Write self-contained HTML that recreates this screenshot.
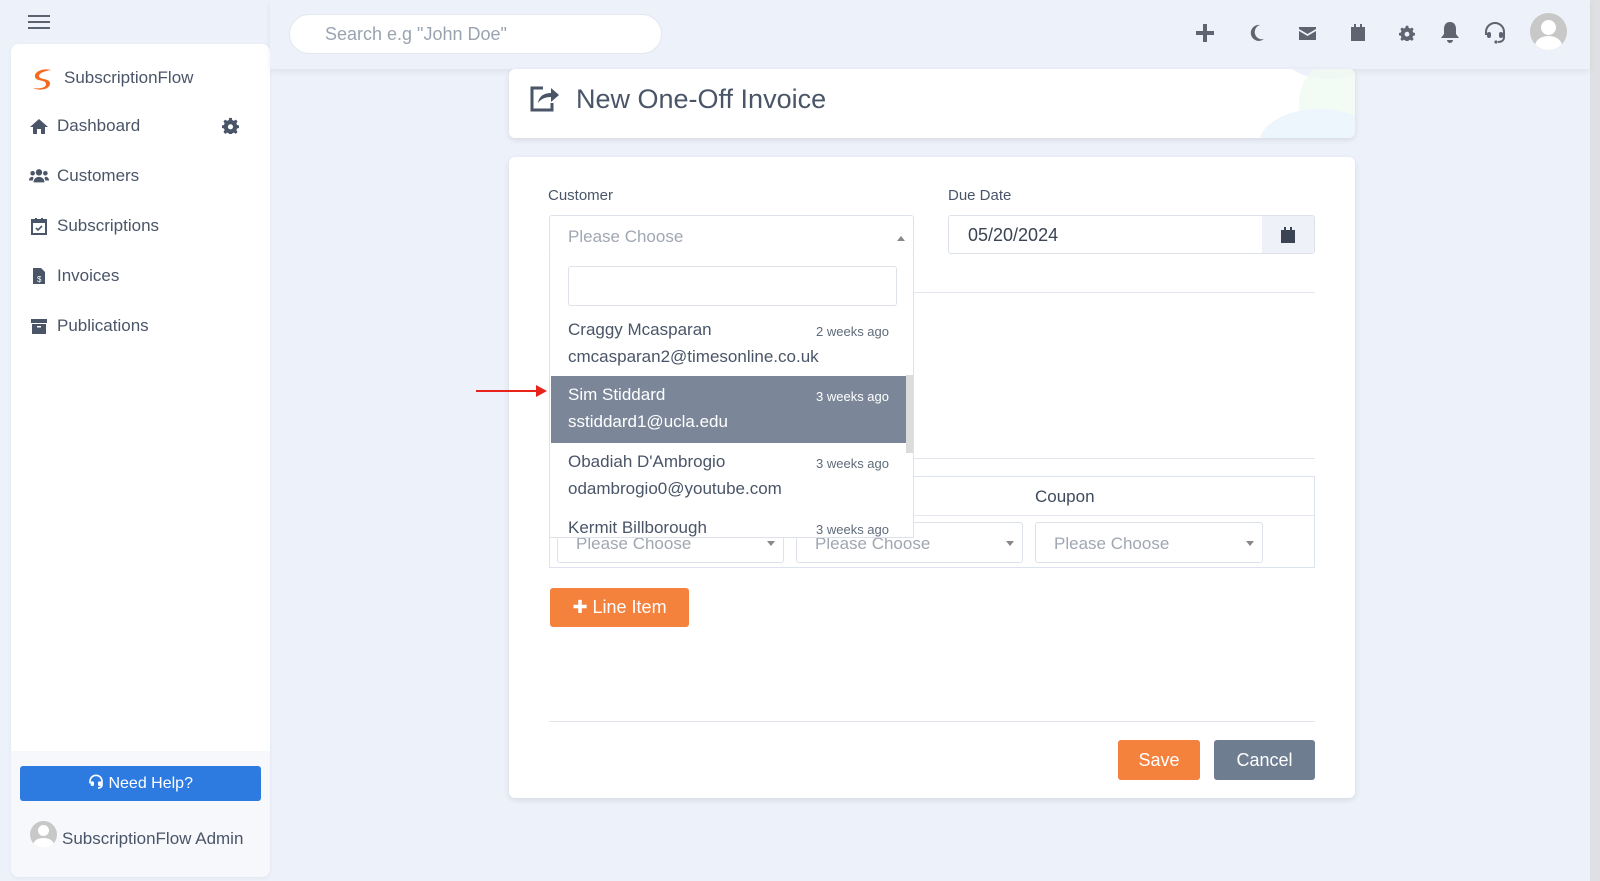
<!DOCTYPE html>
<html><head><meta charset="utf-8"><style>
*{box-sizing:border-box;margin:0;padding:0}
body{width:1600px;height:881px;overflow:hidden;background:#edf1f9;font-family:"Liberation Sans",sans-serif;color:#4a5568;position:relative}
.abs{position:absolute}
.side{left:11px;top:44px;width:259px;height:833px;background:#fff;border-radius:8px;box-shadow:0 1px 4px rgba(0,0,0,.06);overflow:hidden}
.side .foot{position:absolute;left:0;top:707px;width:100%;height:126px;background:#f7f8fc}
.nav{position:absolute;left:18px;font-size:17px;color:#4a5568;display:flex;align-items:center}
.nav svg{width:20px;height:20px;margin-right:8px;fill:#4a5568}
.top{left:270px;top:0;width:1320px;height:69px;background:#edf1f9;box-shadow:0 3px 6px rgba(0,0,0,.06)}
.search{left:289px;top:14px;width:373px;height:40px;background:#fff;border-radius:20px;border:1px solid #e3e7ef;font-size:18px;color:#9aa3b0;padding:9px 0 0 35px}
.ic{fill:#5e6470}
.card{background:#fff;border-radius:6px;box-shadow:0 2px 6px rgba(0,0,0,.1)}
.lbl{font-size:15px;color:#4a5568}
.sel{border:1px solid #dde2ea;border-radius:3px;background:#fff;font-size:17px;color:#a0a7b2;padding:11px 0 0 18px}
.caret{position:absolute;right:8px;top:18px;width:0;height:0;border-left:4px solid transparent;border-right:4px solid transparent;border-top:5px solid #888}
.item{position:absolute;left:1px;width:355px;height:66px;padding:9px 0 0 17px}
.item .n{font-size:17px;color:#4a5568}
.item .e{font-size:17px;color:#4a5568;margin-top:7px}
.item .t{position:absolute;right:17px;top:13px;font-size:13px;color:#5f6b7a}
.btn{border-radius:3px;color:#fff;font-size:18px;text-align:center}
</style></head><body>
<div class="abs" style="left:1590px;top:0;width:10px;height:881px;background:#dfe0e3"></div>
<div class="abs" style="left:28px;top:15px;width:22px;height:2px;background:#5a6270"></div>
<div class="abs" style="left:28px;top:21px;width:22px;height:2px;background:#5a6270"></div>
<div class="abs" style="left:28px;top:27px;width:22px;height:2px;background:#5a6270"></div>

<div class="abs side">
 <svg class="abs" style="left:18px;top:23px" width="28" height="24" viewBox="0 0 28 24"><path d="M22 3C15 1 5 4 6 10c1 5 12 2 11 8-1 3-7 4-13 3 6 3 16 2 17-4 1-6-11-4-11-8 0-3 6-5 12-6z" fill="#f56a1f"/></svg>
 <div class="abs" style="left:53px;top:24px;font-size:17px;color:#4a5568">SubscriptionFlow</div>
 <div class="nav" style="top:72px"><svg viewBox="0 0 20 20"><path d="M10 3L1 11h3v7h4v-5h4v5h4v-7h3z"/></svg>Dashboard</div>
 <svg class="abs" style="left:211px;top:73px" width="17" height="17" viewBox="0 0 20 20"><path fill="#4a5568" d="M8.5 1h3l.5 2.5 2 1 2.2-1.4 2.1 2.1L16.9 7.4l.8 2 2.3.6v3l-2.3.5-.8 2 1.4 2.2-2.1 2.1-2.2-1.4-2 .8-.5 2.3h-3L8 19.2l-2-.8-2.2 1.4-2.1-2.1L3.1 15.5l-.8-2L0 13v-3l2.3-.6.8-2L1.7 5.2l2.1-2.1L6 4.5l2-1z"/><circle cx="10" cy="11.5" r="3" fill="#fff"/></svg>
 <div class="nav" style="top:122px"><svg viewBox="0 0 22 20"><circle cx="11" cy="6" r="3.5"/><circle cx="4" cy="7" r="2.5"/><circle cx="18" cy="7" r="2.5"/><path d="M5 17c0-4 3-6 6-6s6 2 6 6zM0 15c0-3 2-4 4-4l1 1-1 3zM22 15c0-3-2-4-4-4l-1 1 1 3z"/></svg>Customers</div>
 <div class="nav" style="top:172px"><svg viewBox="0 0 20 20"><path d="M3 4h14v14H3z" fill="none" stroke="#4a5568" stroke-width="2"/><rect x="3" y="4" width="14" height="3"/><rect x="6" y="2" width="2" height="3"/><rect x="12" y="2" width="2" height="3"/><path d="M7 12l2 2 4-4" fill="none" stroke="#4a5568" stroke-width="1.6"/></svg>Subscriptions</div>
 <div class="nav" style="top:222px"><svg viewBox="0 0 20 20"><path d="M4 2h8l4 4v12H4z"/><text x="8" y="16" font-size="8" fill="#fff">$</text></svg>Invoices</div>
 <div class="nav" style="top:272px"><svg viewBox="0 0 20 20"><rect x="2" y="3" width="16" height="4"/><rect x="3" y="8" width="14" height="10"/><rect x="8" y="10" width="4" height="1.5" fill="#fff"/></svg>Publications</div>
 <div class="foot">
  <div class="abs btn" style="left:9px;top:15px;width:241px;height:35px;background:#2d7be0;font-size:16px;padding-top:8px">
   <svg width="16" height="16" viewBox="0 0 24 24" style="vertical-align:-2px"><path d="M3 14v-3a9 9 0 0 1 18 0v5c0 3-2 5-6 5" fill="none" stroke="#fff" stroke-width="2.5"/><rect fill="#fff" x="4" y="11" width="5" height="7" rx="2"/><rect fill="#fff" x="15" y="11" width="5" height="7" rx="2"/></svg> Need Help?</div>
  <div class="abs" style="left:19px;top:70px;width:27px;height:27px;border-radius:50%;background:#c8c8c8;overflow:hidden"><div style="position:absolute;left:8px;top:4px;width:11px;height:11px;border-radius:50%;background:#fff"></div><div style="position:absolute;left:3px;top:17px;width:21px;height:14px;border-radius:50%;background:#fff"></div></div>
  <div class="abs" style="left:51px;top:78px;font-size:17px;color:#4a5568">SubscriptionFlow Admin</div>
 </div>
</div>

<div class="abs top"></div>
<div class="abs search">Search e.g "John Doe"</div>
<svg class="abs" style="left:1195px;top:23px" width="20" height="20" viewBox="0 0 20 20"><path class="ic" d="M8 1h4v7h7v4h-7v7H8v-7H1V8h7z"/></svg>
<svg class="abs" style="left:1249px;top:23px" width="16" height="20" viewBox="0 0 16 20"><path class="ic" d="M11 2a8 8 0 1 0 4 14A7 7 0 0 1 11 2z"/></svg>
<svg class="abs" style="left:1299px;top:27px" width="17" height="13" viewBox="0 0 17 13"><path class="ic" d="M0 0h17v2L8.5 7 0 2zM0 4l8.5 5L17 4v9H0z"/></svg>
<svg class="abs" style="left:1351px;top:23px" width="14" height="18" viewBox="0 0 14 18"><path class="ic" d="M0 4h14v14H0z"/><rect class="ic" x="3" y="1" width="2" height="4"/><rect class="ic" x="9" y="1" width="2" height="4"/></svg>
<svg class="abs" style="left:1399px;top:25px" width="16" height="16" viewBox="0 0 20 20"><path fill="#5e6470" d="M8.5 1h3l.5 2.5 2 1 2.2-1.4 2.1 2.1L16.9 7.4l.8 2 2.3.6v3l-2.3.5-.8 2 1.4 2.2-2.1 2.1-2.2-1.4-2 .8-.5 2.3h-3L8 19.2l-2-.8-2.2 1.4-2.1-2.1L3.1 15.5l-.8-2L0 13v-3l2.3-.6.8-2L1.7 5.2l2.1-2.1L6 4.5l2-1z"/><circle cx="10" cy="11.5" r="3" fill="#edf1f9"/></svg>
<svg class="abs" style="left:1440px;top:21px" width="20" height="23" viewBox="0 0 20 23"><path class="ic" d="M10 1c4 0 6 3 6 7v5l3 4H1l3-4V8c0-4 2-7 6-7zM7 19h6a3 3 0 0 1-6 0z"/></svg>
<svg class="abs" style="left:1483px;top:21px" width="24" height="24" viewBox="0 0 24 24"><path d="M3 14v-3a9 9 0 0 1 18 0v5c0 3-2 5-6 5" fill="none" stroke="#5e6470" stroke-width="2"/><rect class="ic" x="4" y="11" width="4" height="6" rx="2"/><rect class="ic" x="16" y="11" width="4" height="6" rx="2"/><circle class="ic" cx="13" cy="21" r="1.6"/></svg>
<div class="abs" style="left:1530px;top:13px;width:37px;height:37px;border-radius:50%;background:#c8c8c8;overflow:hidden"><div style="position:absolute;left:11px;top:7px;width:15px;height:15px;border-radius:50%;background:#fff"></div><div style="position:absolute;left:5px;top:23px;width:27px;height:20px;border-radius:50%;background:#fff"></div></div>

<div class="abs card" style="left:509px;top:69px;width:846px;height:69px;overflow:hidden">
 <div class="abs" style="left:770px;top:-50px;width:100px;height:60px;border-radius:50%;background:#eef0fb"></div>
 <div class="abs" style="left:790px;top:-10px;width:80px;height:90px;border-radius:50%;background:#f0faf3;opacity:.8"></div>
 <div class="abs" style="left:750px;top:40px;width:120px;height:70px;border-radius:50%;background:#edf6fc"></div>
 <svg class="abs" style="left:20px;top:14px" width="32" height="30" viewBox="0 0 32 30"><path d="M14 5H3v22h20v-7" fill="none" stroke="#4a5568" stroke-width="3"/><path d="M9 20c1-7 6-10 13-10V5l8 7-8 7v-5c-6 0-10 2-13 6z" fill="#4a5568"/></svg>
 <div class="abs" style="left:67px;top:15px;font-size:27px;color:#4a5568">New One-Off Invoice</div>
</div>

<div class="abs card" style="left:509px;top:157px;width:846px;height:641px"></div>
<div class="abs lbl" style="left:548px;top:187px">Customer</div>
<div class="abs lbl" style="left:948px;top:187px">Due Date</div>
<div class="abs sel" style="left:549px;top:215px;width:365px;height:41px">Please Choose<div class="caret" style="border-top:none;border-bottom:5px solid #888;top:20px"></div></div>
<div class="abs" style="left:948px;top:215px;width:367px;height:39px;border:1px solid #dde2ea;border-radius:3px;background:#fff;font-size:18px;color:#3a4452;padding:9px 0 0 19px">05/20/2024</div>
<div class="abs" style="left:1262px;top:216px;width:52px;height:37px;background:#eef1f7"><svg style="position:absolute;left:19px;top:10px" width="14" height="17" viewBox="0 0 14 17"><path d="M0 4h14v13H0z" fill="#3a4452"/><rect x="3" y="1" width="2" height="4" fill="#3a4452"/><rect x="9" y="1" width="2" height="4" fill="#3a4452"/></svg></div>
<div class="abs" style="left:914px;top:292px;width:401px;height:1px;background:#e2e6ec"></div>
<div class="abs" style="left:549px;top:458px;width:766px;height:1px;background:#e2e6ec"></div>

<div class="abs" style="left:549px;top:476px;width:766px;height:92px;border:1px solid #dde3ee"></div>
<div class="abs" style="left:549px;top:515px;width:766px;height:1px;background:#e6eaf0"></div>
<div class="abs" style="left:1035px;top:487px;font-size:17px;color:#3f4a5a">Coupon</div>
<div class="abs sel" style="left:557px;top:522px;width:227px;height:41px">Please Choose<div class="caret"></div></div>
<div class="abs sel" style="left:796px;top:522px;width:227px;height:41px">Please Choose<div class="caret"></div></div>
<div class="abs sel" style="left:1035px;top:522px;width:228px;height:41px">Please Choose<div class="caret"></div></div>

<div class="abs" style="left:549px;top:255px;width:365px;height:283px;background:#fff;border:1px solid #dde2ea;border-top:none;overflow:hidden">
 <div class="abs" style="left:18px;top:11px;width:329px;height:40px;border:1px solid #dde2ea;border-radius:3px"></div>
 <div class="item" style="top:56px"><div class="n">Craggy Mcasparan</div><div class="e">cmcasparan2@timesonline.co.uk</div><div class="t">2 weeks ago</div></div>
 <div class="item" style="top:121px;background:#7b8799;height:67px"><div class="n" style="color:#fff">Sim Stiddard</div><div class="e" style="color:#fff">sstiddard1@ucla.edu</div><div class="t" style="color:#fff">3 weeks ago</div></div>
 <div class="item" style="top:188px"><div class="n">Obadiah D'Ambrogio</div><div class="e">odambrogio0@youtube.com</div><div class="t">3 weeks ago</div></div>
 <div class="item" style="top:254px"><div class="n">Kermit Billborough</div><div class="t">3 weeks ago</div></div>
 <div class="abs" style="left:356px;top:120px;width:7px;height:78px;background:#dcdcdc"></div>
</div>

<div class="abs" style="left:476px;top:390px;width:64px;height:2px;background:#e8231b"></div>
<div class="abs" style="left:536px;top:385px;width:0;height:0;border-top:6px solid transparent;border-bottom:6px solid transparent;border-left:11px solid #e8231b"></div>

<div class="abs btn" style="left:550px;top:588px;width:139px;height:39px;background:#f4813c;padding-top:9px">&#10010; Line Item</div>
<div class="abs" style="left:549px;top:721px;width:766px;height:1px;background:#e2e6ec"></div>
<div class="abs btn" style="left:1118px;top:740px;width:82px;height:40px;background:#f4813c;padding-top:10px">Save</div>
<div class="abs btn" style="left:1214px;top:740px;width:101px;height:40px;background:#6f7d91;padding-top:10px">Cancel</div>
</body></html>
